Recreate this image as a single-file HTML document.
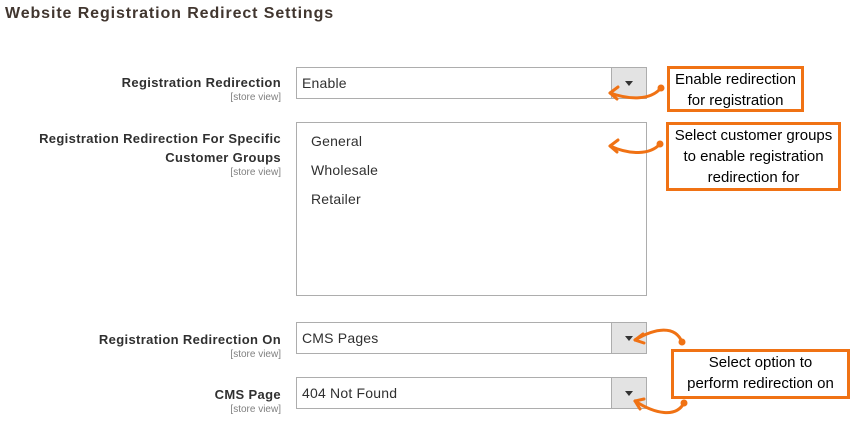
<!DOCTYPE html>
<html><head><style>
body{margin:0;width:856px;height:421px;background:#fff;font-family:"Liberation Sans",sans-serif;position:relative;overflow:hidden;color:#303030}
.a{position:absolute}
.t{left:5px;top:5px;font-size:16px;font-weight:bold;color:#41362f;letter-spacing:0.9px}
.lbl{right:575px;text-align:right;font-size:13px;font-weight:bold;color:#303030;line-height:19px;letter-spacing:0.35px}
.sv{font-size:10px;color:#808080;font-weight:normal;line-height:12px;letter-spacing:0}
.sel{left:296px;width:351px;height:32px;border:1px solid #adadad;box-sizing:border-box;font-size:14px;line-height:30px;padding-left:5px;color:#303030;letter-spacing:0.2px}
.btn{position:absolute;right:0;top:0;width:34px;height:30px;background:#e3e3e3;border-left:1px solid #adadad}
.btn:after{content:"";position:absolute;left:13px;top:13px;border-left:4px solid transparent;border-right:4px solid transparent;border-top:5px solid #333}
.box{border:3px solid #f07214;box-sizing:border-box;background:#fff;font-size:14px;color:#000;text-align:center;line-height:22px}
.ms div{font-size:14px;margin-left:9px;height:29px;line-height:29px}
</style></head><body>
<div class="a t">Website Registration Redirect Settings</div>

<div class="a lbl" style="top:73px">Registration Redirection<div class="sv">[store view]</div></div>
<div class="a sel" style="top:67px">Enable<div class="btn"></div></div>

<div class="a lbl" style="top:129px">Registration Redirection For Specific<br>Customer Groups<div class="sv">[store view]</div></div>
<div class="a sel ms" style="top:122px;height:174px;padding-top:4px;line-height:29px"><div>General</div><div>Wholesale</div><div>Retailer</div></div>

<div class="a lbl" style="top:330px">Registration Redirection On<div class="sv">[store view]</div></div>
<div class="a sel" style="top:322px">CMS Pages<div class="btn"></div></div>

<div class="a lbl" style="top:385px">CMS Page<div class="sv">[store view]</div></div>
<div class="a sel" style="top:377px">404 Not Found<div class="btn"></div></div>

<div class="a box" style="left:667px;top:66px;width:137px;height:46px;padding-top:0px;line-height:21px;font-size:15px">Enable redirection<br>for registration</div>
<div class="a box" style="left:666px;top:122px;width:175px;height:69px;padding-top:0px;line-height:21px;font-size:15px">Select customer groups<br>to enable registration<br>redirection for</div>
<div class="a box" style="left:671px;top:349px;width:179px;height:50px;padding-top:0px;line-height:21px;font-size:15px">Select option to<br>perform redirection on</div>

<svg class="a" style="left:0;top:0" width="856" height="421">
<g fill="none" stroke="#f07214" stroke-width="3" stroke-linecap="round">
<path d="M660 89 C650 100 630 100 610 93"/><path d="M610 93 L618 87 M610 93 L617 99"/>
<path d="M660 144 C650 155 630 155 610 146"/><path d="M610 146 L618 140 M610 146 L617 152"/>
<path d="M682 342 C675 325 655 328 635 340"/><path d="M635 340 L643 334 M635 340 L644 343"/>
<path d="M684 403 C676 418 655 414 635 401"/><path d="M635 401 L644 399 M635 401 L640 409"/>
</g>
<g fill="#f07214"><circle cx="661" cy="88" r="3.5"/><circle cx="660" cy="144" r="3.5"/><circle cx="682" cy="342" r="3.5"/><circle cx="684" cy="403" r="3.5"/></g>
</svg>
</body></html>
